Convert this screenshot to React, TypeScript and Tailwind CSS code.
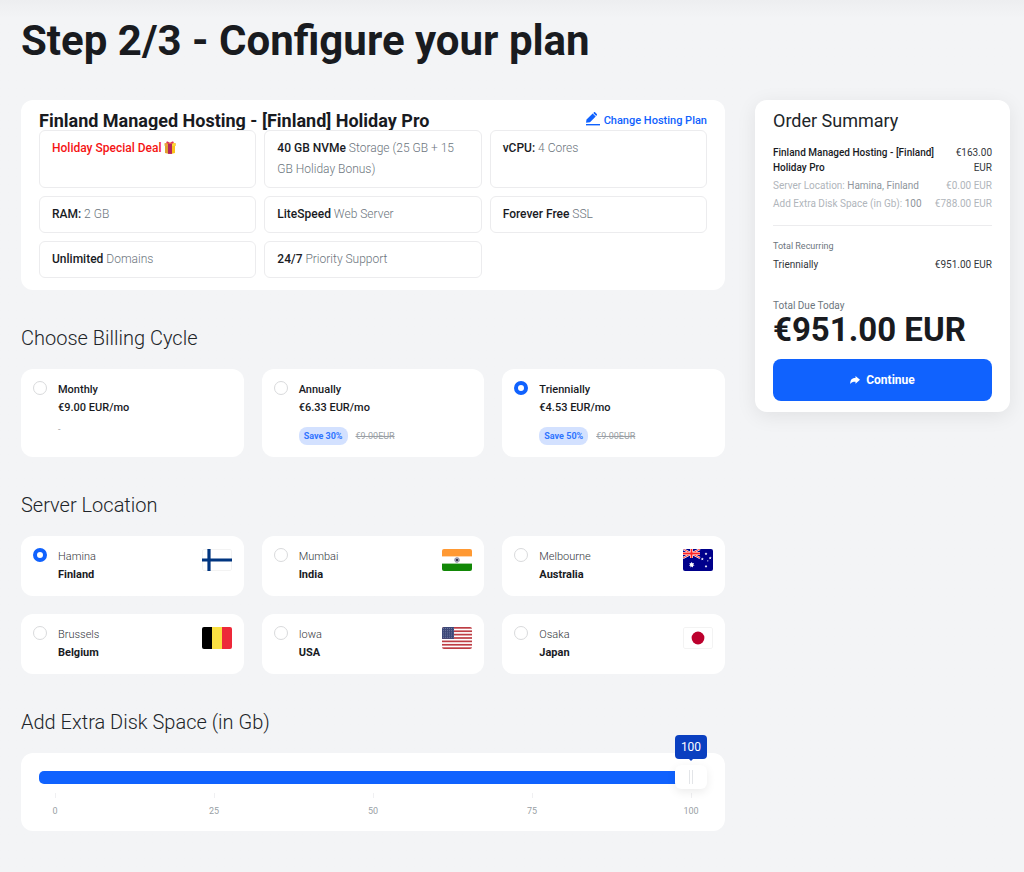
import { useState, type CSSProperties, type ReactNode } from "react";

const features = [
  { strong: "40 GB NVMe", text: "Storage (25 GB + 15 GB Holiday Bonus)" },
  { strong: "vCPU:", text: "4 Cores" },
  { strong: "RAM:", text: "2 GB" },
  { strong: "LiteSpeed", text: "Web Server" },
  { strong: "Forever Free", text: "SSL" },
  { strong: "Unlimited", text: "Domains" },
  { strong: "24/7", text: "Priority Support" },
];

const cycles = [
  { id: "monthly", label: "Monthly", price: "€9.00 EUR/mo", save: "", old: "" },
  { id: "annually", label: "Annually", price: "€6.33 EUR/mo", save: "Save 30%", old: "€9.00EUR" },
  { id: "triennially", label: "Triennially", price: "€4.53 EUR/mo", save: "Save 50%", old: "€9.00EUR" },
];

const locations = [
  { city: "Hamina", country: "Finland", Flag: FinlandFlag },
  { city: "Mumbai", country: "India", Flag: IndiaFlag },
  { city: "Melbourne", country: "Australia", Flag: AustraliaFlag },
  { city: "Brussels", country: "Belgium", Flag: BelgiumFlag },
  { city: "Iowa", country: "USA", Flag: UsaFlag },
  { city: "Osaka", country: "Japan", Flag: JapanFlag },
];

const ticks = [0, 25, 50, 75, 100];

const radioClass =
  "h-3.5 w-3.5 shrink-0 appearance-none rounded-full border border-[#d9dadc] bg-white checked:border-4 checked:border-[#1062fe]";

function FlagBox({ children }: { children: ReactNode }) {
  return (
    <svg viewBox="0 0 30 22" className="mt-px h-[22px] w-[30px] shrink-0 overflow-hidden rounded-xs" aria-hidden="true">
      {children}
    </svg>
  );
}

function FlagOutline() {
  return <rect x="0.5" y="0.5" width="29" height="21" rx="1.5" fill="#fff" stroke="#f3f3f3" />;
}

function FinlandFlag() {
  return (
    <FlagBox>
      <FlagOutline />
      <path d="M7 0v22M0 11h30" stroke="#003580" strokeWidth="3.2" />
    </FlagBox>
  );
}

function IndiaFlag() {
  return (
    <FlagBox>
      <rect width="30" height="22" fill="#fff" />
      <rect width="30" height="7.4" fill="#f93" />
      <rect y="14.6" width="30" height="7.4" fill="#128807" />
      <circle cx="15" cy="11" r="2.4" fill="#b9bac9" stroke="#6b6b8c" strokeWidth="0.8" strokeDasharray="0.8 0.3" />
      <circle cx="15" cy="11" r="1.3" fill="#33334f" />
    </FlagBox>
  );
}

function AustraliaFlag() {
  return (
    <FlagBox>
      <rect width="30" height="22" fill="#00008b" />
      <path d="M0 0l17 9M17 0L0 9" stroke="#fff" strokeWidth="2" />
      <path d="M0 0l17 9M17 0L0 9" stroke="#f33" strokeWidth="1" />
      <path d="M8.5 0v9M0 4.5h17" stroke="#fff" strokeWidth="3" />
      <path d="M8.5 0v9M0 4.5h17" stroke="#f22" strokeWidth="1.8" />
      <path
        d="M8.7 12.8l.7 1.5 1.6-.4-.7 1.5 1.3 1-1.6.4v1.7l-1.3-1.1-1.3 1.1v-1.7l-1.6-.4 1.3-1-.7-1.5 1.6.4z"
        fill="#fff"
      />
      <g fill="#fff">
        <path d="M23 3.2l.4 1 1 .1-.7.7.3 1-1-.5-1 .5.3-1-.7-.7 1-.1z" />
        <path d="M19.3 8.4l.4 1 1 .1-.7.7.3 1-1-.5-1 .5.3-1-.7-.7 1-.1z" />
        <path d="M27.2 7.4l.4 1 1 .1-.7.7.3 1-1-.5-1 .5.3-1-.7-.7 1-.1z" />
        <path d="M23 15.8l.4 1 1 .1-.7.7.3 1-1-.5-1 .5.3-1-.7-.7 1-.1z" />
        <circle cx="24.8" cy="11.8" r="0.6" />
      </g>
    </FlagBox>
  );
}

function BelgiumFlag() {
  return (
    <FlagBox>
      <rect width="10" height="22" fill="#000" />
      <rect x="10" width="10" height="22" fill="#fae042" />
      <rect x="20" width="10" height="22" fill="#ed2939" />
    </FlagBox>
  );
}

function UsaFlag() {
  return (
    <FlagBox>
      <rect width="30" height="22" fill="#fff" />
      {[0, 2, 4, 6, 8, 10, 12].map((i) => (
        <rect key={i} y={(i * 22) / 13} width="30" height={22 / 13} fill="#bd3d44" />
      ))}
      <rect width="12" height="11.9" fill="#3d4878" />
      {[1.5, 3.7, 5.9, 8.1, 10.3].map((y) => (
        <path key={y} d={`M1 ${y}h10.5`} stroke="#8d95b5" strokeWidth="0.8" strokeDasharray="0.8 1.2" />
      ))}
    </FlagBox>
  );
}

function JapanFlag() {
  return (
    <FlagBox>
      <FlagOutline />
      <circle cx="15" cy="11" r="6.4" fill="#bc002d" />
    </FlagBox>
  );
}

function GiftIcon() {
  return (
    <svg viewBox="0 0 12 13" className="inline h-[13px] w-3 align-[-2px]" aria-hidden="true">
      <path d="M1 4.5h10V12l-3 .8-7-.8z" fill="#fcc21b" />
      <path d="M1 4.5h3V12.4L1 12z" fill="#e0a030" />
      <path d="M.5 2.2L6 1.2l5.600 1v2.600L6 5.400.5 4.800z" fill="#e8a33d" />
      <path d="M7 1.6l4.600.6v2.600L7 5.300z" fill="#fdd835" />
      <path d="M4 3h4v9.900H4z" fill="#b3245e" />
      <path d="M6 2.800C4.200-.4 1.600.3 2.400 1.800 3 2.900 5 3 6 2.800zM6 2.800C7.800-.4 10.400.3 9.600 1.800 9 2.900 7 3 6 2.800z" fill="#e0315a" />
    </svg>
  );
}

function EditIcon() {
  return (
    <svg viewBox="0 0 14 14" className="-mt-1 h-3.5 w-3.5" fill="currentColor" aria-hidden="true">
      <path d="M6.700 1.600L9.700 4.600 4 10.300 0 10.800 .5 7.600zM7.200 1.100L7.900.4c.4-.4 1-.4 1.400 0l1.500 1.500c.4.4.4 1 0 1.400L10.200 4.100z" />
      <rect y="12" width="14" height="1.4" />
    </svg>
  );
}

function ContinueIcon() {
  return (
    <svg viewBox="0 0 10 8" className="h-2 w-2.5" fill="currentColor" aria-hidden="true">
      <path d="M5.500 0v2C2.200 2 .2 3.500.2 8 1.200 6.300 2.900 5.800 5.500 5.800v1.900L10 3.800z" />
    </svg>
  );
}

function SectionTitle({ children }: { children: ReactNode }) {
  return <h2 className="mt-[33px] mb-4 text-xl leading-[30px] font-light text-[#212529]">{children}</h2>;
}

function PlanCard() {
  return (
    <section className="rounded-xl bg-white px-[18px] py-3">
      <div className="flex items-center justify-between">
        <h2 className="text-lg leading-[18px] font-bold">Finland Managed Hosting - [Finland] Holiday Pro</h2>
        <a href="#plans" className="flex items-center gap-1 text-[11px] leading-[18px] font-medium text-[#1062fe]">
          <EditIcon />
          Change Hosting Plan
        </a>
      </div>
      <ul className="grid grid-cols-3 gap-2 text-[12px] leading-[21px]">
        <li className="rounded-md border border-[#ececee] px-3 py-[7px] font-medium text-[#f51414]">
          Holiday Special Deal <GiftIcon />
        </li>
        {features.map((f) => (
          <li key={f.strong} className="rounded-md border border-[#ececee] px-3 py-[7px] font-light text-[#6c757d]">
            <strong className="font-medium text-[#191b1f]">{f.strong}</strong> {f.text}
          </li>
        ))}
      </ul>
    </section>
  );
}

function OrderSummary() {
  return (
    <aside className="w-[255px] shrink-0 rounded-xl bg-white px-[18px] pt-[9px] pb-[11px] shadow-[0_4px_20px_rgba(0,0,0,0.08)]">
      <h2 className="text-lg leading-6 text-[#212529]">Order Summary</h2>
      <div className="mt-3 flex justify-between gap-3 text-[10px] leading-[15px]">
        <span className="font-medium">Finland Managed Hosting - [Finland] Holiday Pro</span>
        <span className="text-right text-[#33363b]">€163.00 EUR</span>
      </div>
      <div className="mt-[3px] flex justify-between text-[10px] leading-[15px] text-[#b0b5bb]">
        <span>
          Server Location: <span className="text-[#8f959c]">Hamina, Finland</span>
        </span>
        <span>€0.00 EUR</span>
      </div>
      <div className="mt-[3px] flex justify-between text-[10px] leading-[15px] text-[#b0b5bb]">
        <span>
          Add Extra Disk Space (in Gb): <span className="text-[#8f959c]">100</span>
        </span>
        <span>€788.00 EUR</span>
      </div>
      <hr className="mt-3.5 border-[#ececee]" />
      <p className="mt-[13px] text-[9px] leading-[15px] text-[#6c757d]">Total Recurring</p>
      <div className="mt-[3px] flex justify-between text-[10px] leading-[15px] text-[#33363b]">
        <span>Triennially</span>
        <span>€951.00 EUR</span>
      </div>
      <p className="mt-[26px] text-[10px] leading-[15px] text-[#6c757d]">Total Due Today</p>
      <p className="text-[33px] leading-[34px] font-bold">€951.00 EUR</p>
      <button
        type="button"
        className="mt-3 flex h-[42px] w-full items-center justify-center gap-1.5 rounded-lg bg-[#1062fe] text-[12px] font-bold text-white"
      >
        <ContinueIcon />
        Continue
      </button>
    </aside>
  );
}

export default function App() {
  const [cycle, setCycle] = useState("triennially");
  const [city, setCity] = useState("Hamina");
  const [disk, setDisk] = useState(100);

  return (
    <div className="min-h-screen bg-[#f3f4f6] bg-linear-to-b from-[#edeef0] to-[#f3f4f6] to-[18px] pr-3.5 pb-10 pl-[21px] font-['Roboto','Liberation_Sans',sans-serif] text-[#191b1f]">
      <h1 className="pt-[15px] pb-[33px] text-[42px] leading-[52px] font-bold">Step 2/3 - Configure your plan</h1>

      <div className="flex items-start gap-[30px]">
        <main className="min-w-0 flex-1">
          <PlanCard />

          <SectionTitle>Choose Billing Cycle</SectionTitle>
          <div className="grid grid-cols-3 gap-[18px]">
            {cycles.map((c) => (
              <label key={c.id} className="flex gap-[11px] rounded-xl bg-white p-3">
                <input
                  type="radio"
                  name="cycle"
                  className={radioClass}
                  checked={cycle === c.id}
                  onChange={() => setCycle(c.id)}
                />
                <span className="text-[11px] leading-[18px] font-medium">
                  <span className="block">{c.label}</span>
                  <span className="block">{c.price}</span>
                  {c.save ? (
                    <span className="mt-2.5 flex items-center gap-2 text-[9px] text-[#9a9fa5]">
                      <span className="rounded-lg bg-[#d3e1ff] px-[5px] font-bold text-[#2f75ff]">{c.save}</span>
                      <s className="font-normal">{c.old}</s>
                    </span>
                  ) : (
                    <span className="mt-[3px] block text-[9px] font-normal text-[#9a9fa5]">-</span>
                  )}
                </span>
              </label>
            ))}
          </div>

          <SectionTitle>Server Location</SectionTitle>
          <div className="grid grid-cols-3 gap-[18px]">
            {locations.map(({ city: name, country, Flag }) => (
              <label key={name} className="flex gap-[11px] rounded-xl bg-white p-3">
                <input
                  type="radio"
                  name="location"
                  className={radioClass}
                  checked={city === name}
                  onChange={() => setCity(name)}
                />
                <span className="flex-1 text-[11px] leading-[18px]">
                  <span className="block font-light text-[#33363b]">{name}</span>
                  <span className="block font-bold">{country}</span>
                </span>
                <Flag />
              </label>
            ))}
          </div>

          <SectionTitle>
            <label htmlFor="disk">Add Extra Disk Space (in Gb)</label>
          </SectionTitle>
          <div className="rounded-xl bg-white px-[18px] py-3">
            <div className="relative">
              <input
                id="disk"
                type="range"
                min={0}
                max={100}
                value={disk}
                onChange={(e) => setDisk(Number(e.target.value))}
                className="block h-6 w-full appearance-none bg-transparent [&::-webkit-slider-runnable-track]:h-[13px] [&::-webkit-slider-runnable-track]:rounded-[5px] [&::-webkit-slider-runnable-track]:bg-[linear-gradient(90deg,#1062fe_var(--fill),#e3e8ef_var(--fill))] [&::-webkit-slider-thumb]:-mt-[6px] [&::-webkit-slider-thumb]:h-6 [&::-webkit-slider-thumb]:w-8 [&::-webkit-slider-thumb]:appearance-none [&::-webkit-slider-thumb]:rounded-md [&::-webkit-slider-thumb]:bg-white [&::-webkit-slider-thumb]:bg-[linear-gradient(90deg,transparent_14px,#e3e5e8_14px,#e3e5e8_15px,transparent_15px,transparent_17px,#e3e5e8_17px,#e3e5e8_18px,transparent_18px)] [&::-webkit-slider-thumb]:bg-[length:32px_14px] [&::-webkit-slider-thumb]:bg-center [&::-webkit-slider-thumb]:bg-no-repeat [&::-webkit-slider-thumb]:shadow-[0_3px_10px_rgba(0,0,0,0.08)]"
                style={{ "--fill": `${disk}%` } as CSSProperties}
              />
              <output
                htmlFor="disk"
                className="absolute bottom-[30px] h-6 w-8 -translate-x-1/2 rounded-sm bg-[#0a3fc0] text-center text-[12px] leading-6 text-white after:absolute after:top-full after:left-1/2 after:-translate-x-1/2 after:border-x-2 after:border-t-2 after:border-x-transparent after:border-t-[#0a3fc0]"
                style={{ left: `calc(16px + (100% - 32px) * ${disk / 100})` }}
              >
                {disk}
              </output>
            </div>
            <div className="mt-1 flex justify-between text-[9px] leading-[15px] text-[#9a9fa5]">
              {ticks.map((t) => (
                <span key={t} className="flex w-8 flex-col items-center gap-1.5">
                  <span className="h-[5px] w-px bg-[#f0f0f2]" />
                  {t}
                </span>
              ))}
            </div>
          </div>
        </main>

        <OrderSummary />
      </div>
    </div>
  );
}
